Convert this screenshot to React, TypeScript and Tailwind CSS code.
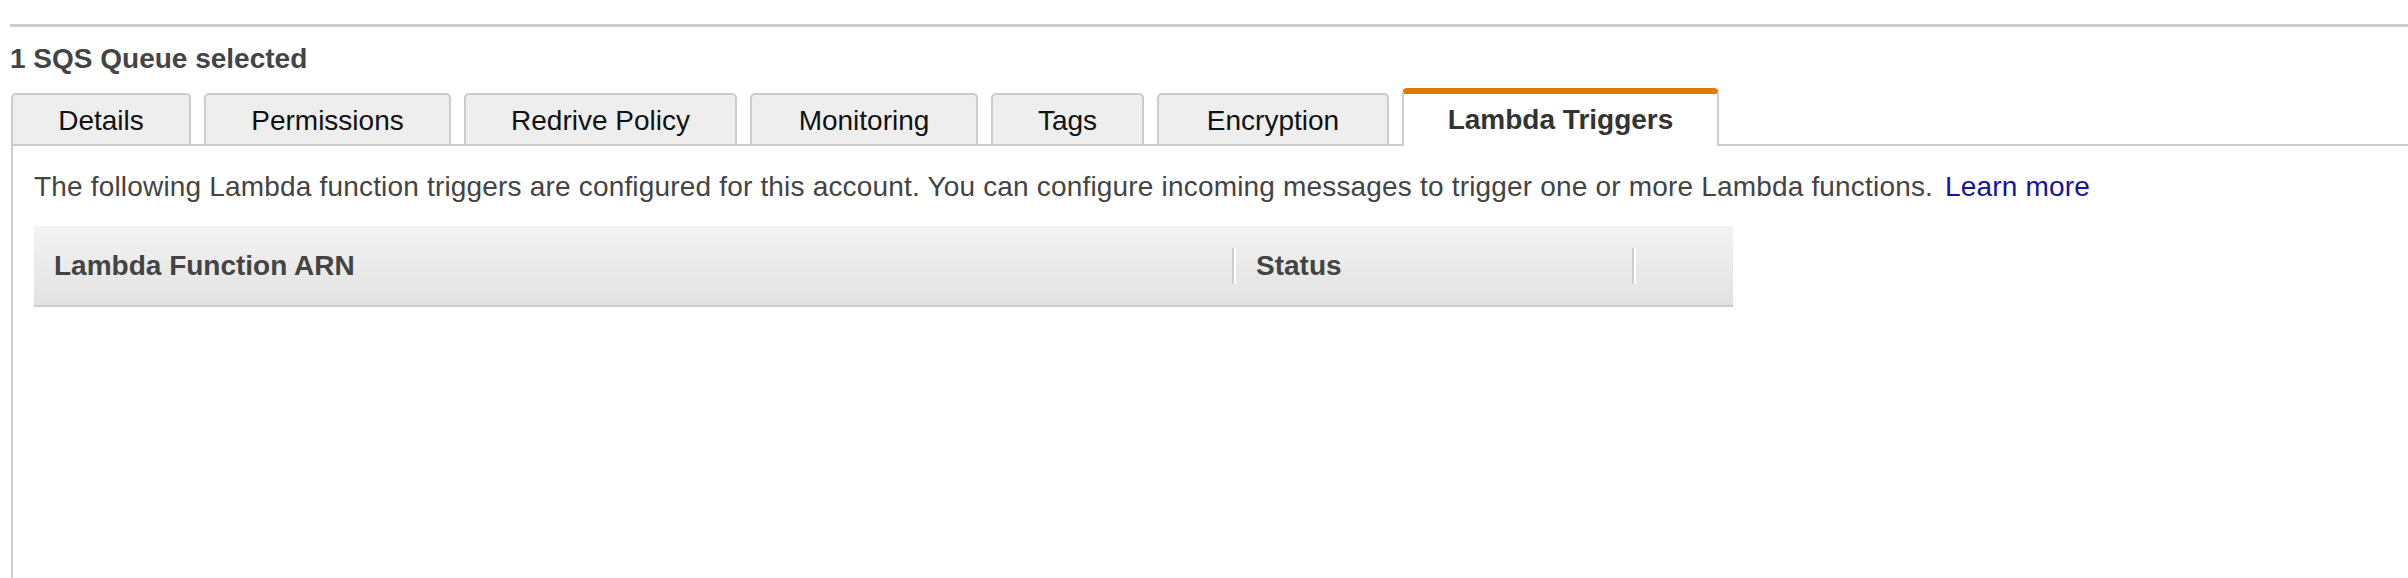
import React from "react";

type Tab = { label: string; width: number; active?: boolean };

const tabs: Tab[] = [
  { label: "Details", width: 180 },
  { label: "Permissions", width: 247 },
  { label: "Redrive Policy", width: 273 },
  { label: "Monitoring", width: 228 },
  { label: "Tags", width: 153 },
  { label: "Encryption", width: 232 },
  { label: "Lambda Triggers", width: 317, active: true },
];

function TabButton({ tab }: { tab: Tab }) {
  if (tab.active) {
    return (
      <div
        className="relative z-10 -mb-[2px] flex h-[58px] shrink-0 items-center justify-center rounded-t-[5px] border-x-2 border-t-[6px] border-x-[#cccccc] border-t-[#e07b00] bg-white text-[28px] font-bold text-[#333333]"
        style={{ width: tab.width }}
      >
        {tab.label}
      </div>
    );
  }
  return (
    <div
      className="flex h-[51px] shrink-0 items-center justify-center rounded-t-[5px] border-x-2 border-t-2 border-[#cccccc] bg-[#eeeeee] pt-[2px] text-[28px] text-[#111111]"
      style={{ width: tab.width }}
    >
      {tab.label}
    </div>
  );
}

function HeaderDivider() {
  return (
    <div className="flex h-[36px] w-[4px] shrink-0">
      <div className="w-[2px] bg-[#cfcfcf]" />
      <div className="w-[2px] bg-white" />
    </div>
  );
}

export default function App() {
  return (
    <div className="flex h-[578px] w-full flex-col overflow-hidden bg-white font-['Liberation_Sans',Arial,sans-serif] leading-[32px]">
      <div className="ml-[10px] mt-[24px] h-[3px] shrink-0 bg-[#cccccc]" />

      <h2 className="ml-[10px] mt-[16px] text-[28px] font-bold leading-[32px] text-[#444444]">
        1 SQS Queue selected
      </h2>

      <div className="mt-[13px] flex items-end gap-[13px] pl-[11px]">
        {tabs.map((tab) => (
          <TabButton key={tab.label} tab={tab} />
        ))}
      </div>

      <div className="ml-[11px] flex-1 border-l-2 border-t-2 border-[#cccccc] pl-[21px] pt-[25px]">
        <p className="text-[28px] tracking-[0.18px] text-[#444444]">
          The following Lambda function triggers are configured for this account. You can configure incoming messages to trigger one or more Lambda functions.{" "}
          <a href="#" className="ml-[4px] text-[#14149c]">
            Learn more
          </a>
        </p>

        <div className="mt-[23px] flex h-[81px] w-[1699px] items-center border-b-2 border-[#cccccc] bg-gradient-to-b from-[#f3f3f3] to-[#e2e2e2] text-[28px] font-bold text-[#444444]">
          <div className="w-[1198px] shrink-0 pl-[20px]">Lambda Function ARN</div>
          <HeaderDivider />
          <div className="w-[396px] shrink-0 pl-[20px]">Status</div>
          <HeaderDivider />
          <div className="flex-1" />
        </div>
      </div>
    </div>
  );
}
